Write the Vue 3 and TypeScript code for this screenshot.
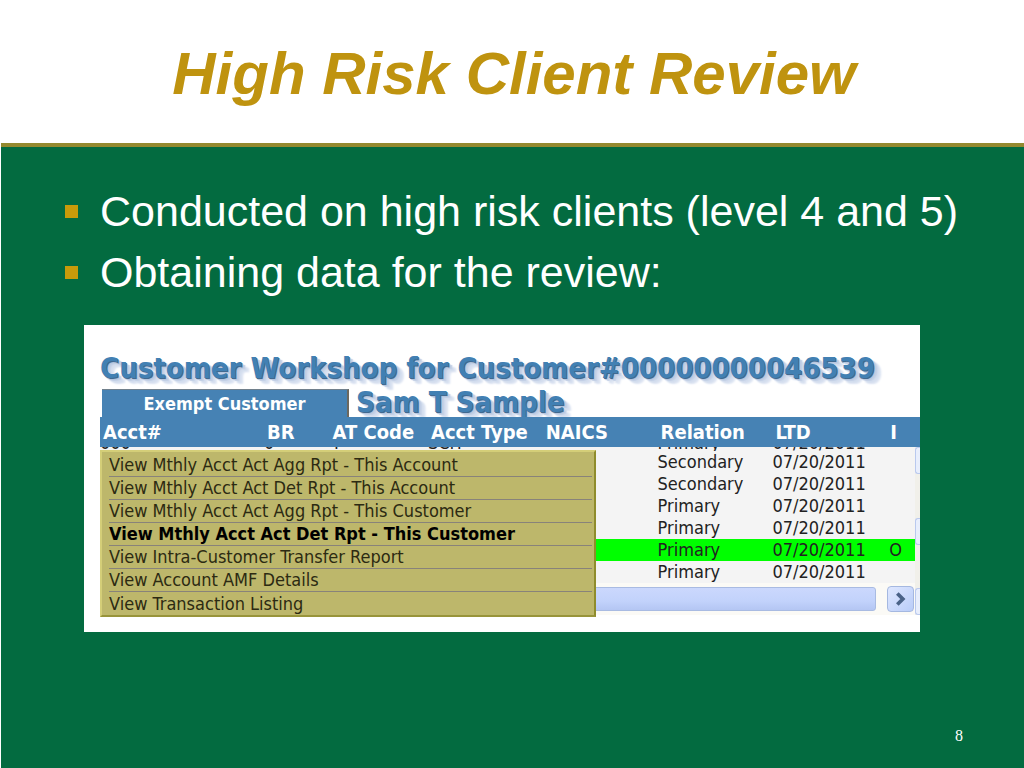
<script setup lang="ts">
interface Account {
  relation: string
  ltd: string
  flag?: string
  selected?: boolean
}

const points: string[] = [
  'Conducted on high risk clients (level 4 and 5)',
  'Obtaining data for the review:',
]

const columns: string[] = ['Acct#', 'BR', 'AT Code', 'Acct Type', 'NAICS', 'Relation', 'LTD', 'I']

const scrolledRow: string[] = ['000', '0', '4', 'SCH', '', 'Primary', '07/20/2011', '']

const accounts: Account[] = [
  { relation: 'Secondary', ltd: '07/20/2011' },
  { relation: 'Secondary', ltd: '07/20/2011' },
  { relation: 'Primary', ltd: '07/20/2011' },
  { relation: 'Primary', ltd: '07/20/2011' },
  { relation: 'Primary', ltd: '07/20/2011', flag: 'O', selected: true },
  { relation: 'Primary', ltd: '07/20/2011' },
]

const menu: { label: string; active?: boolean }[] = [
  { label: 'View Mthly Acct Act Agg Rpt - This Account' },
  { label: 'View Mthly Acct Act Det Rpt - This Account' },
  { label: 'View Mthly Acct Act Agg Rpt - This Customer' },
  { label: 'View Mthly Acct Act Det Rpt - This Customer', active: true },
  { label: 'View Intra-Customer Transfer Report' },
  { label: 'View Account AMF Details' },
  { label: 'View Transaction Listing' },
]
</script>

<template>
  <main class="slide">
    <header class="head">
      <h1>High Risk Client Review</h1>
    </header>
    <section class="body">
      <ul class="points">
        <li v-for="p in points" :key="p">{{ p }}</li>
      </ul>

      <div class="panel">
        <h2 class="workshop">Customer Workshop for Customer#00000000046539</h2>
        <div class="tabs">
          <button type="button" class="tab">Exempt Customer</button>
          <span class="workshop">Sam T Sample</span>
        </div>

        <div class="grid">
          <table>
            <thead>
              <tr>
                <th v-for="c in columns" :key="c" scope="col">{{ c }}</th>
              </tr>
            </thead>
            <tbody>
              <tr class="scrolled">
                <td v-for="(c, i) in scrolledRow" :key="i"><div>{{ c }}</div></td>
              </tr>
              <tr v-for="(a, i) in accounts" :key="i" :class="{ selected: a.selected }">
                <td colspan="5"></td>
                <td>{{ a.relation }}</td>
                <td>{{ a.ltd }}</td>
                <td class="flag">{{ a.flag }}</td>
              </tr>
            </tbody>
          </table>
          <div class="vscroll"><i></i><i></i><i></i></div>
          <div class="hscroll">
            <div class="thumb"></div>
            <button type="button" class="arrow" aria-label="Scroll right">
              <svg viewBox="0 0 26 26" width="26" height="24">
                <path d="M9 7l6 6-6 6" fill="none" stroke="#4a6287" stroke-width="4" />
              </svg>
            </button>
          </div>
          <div class="menu">
            <button v-for="m in menu" :key="m.label" type="button" :class="{ active: m.active }">{{ m.label }}</button>
          </div>
        </div>
      </div>

      <footer>8</footer>
    </section>
  </main>
</template>

<style>
body {
  margin: 0;
  background: #fff;
}
</style>

<style scoped>
* {
  box-sizing: border-box;
}
.slide {
  min-height: 100vh;
  display: flex;
  flex-direction: column;
  font-family: 'Liberation Sans', Arial, sans-serif;
}
.head {
  height: 143px;
  padding: 4px 0 0 4px;
  display: flex;
  align-items: center;
  justify-content: center;
}
h1 {
  margin: 0;
  color: #bf930f;
  font-size: 60px;
  font-style: italic;
  font-weight: bold;
  line-height: 68px;
}
.body {
  flex: 1;
  margin-left: 1px;
  border-top: 4px solid #94892f;
  background: #036b40;
  display: flex;
  flex-direction: column;
}
.points {
  list-style: none;
  margin: 0;
  padding: 34px 0 0 64px;
  color: #fff;
  font-size: 43px;
  line-height: 61px;
}
.points li {
  display: flex;
  align-items: center;
  gap: 22px;
}
.points li::before {
  content: '';
  width: 13px;
  height: 13px;
  background: #c89b0a;
}
.panel {
  margin: 22px 104px 0 83px;
  padding: 29px 0 17px 16px;
  background: #fff;
  font-family: 'DejaVu Sans Condensed', 'DejaVu Sans', sans-serif;
}
.workshop {
  margin: 0;
  font-size: 29px;
  font-weight: bold;
  line-height: 29px;
  white-space: nowrap;
  color: #4280b3;
  text-shadow: 1px 1px 0 #41698f, 2px 2px 1px #b3c4dd, 4px 3px 1px #c3d0e6, 6px 5px 2px #d3ddee, 8px 6px 2px #e0e7f4;
}
.tabs {
  display: flex;
  height: 34px;
  padding-left: 2px;
  align-items: flex-end;
  gap: 7px;
}
.tab {
  width: 247px;
  height: 28px;
  padding: 0;
  border: 0;
  border-top: 1px solid #71808c;
  border-right: 2px solid #6b6860;
  background: #4682b4;
  color: #fff;
  font: bold 18px/26px 'DejaVu Sans Condensed', 'DejaVu Sans', sans-serif;
}
.grid {
  position: relative;
  background: #f4f4f4;
}
table {
  width: 100%;
  table-layout: fixed;
  border-collapse: collapse;
}
th {
  height: 30px;
  padding: 0 0 0 3px;
  background: #4682b4;
  color: #fff;
  font-size: 20px;
  line-height: 30px;
  text-align: left;
  white-space: nowrap;
}
th:nth-child(1) { width: 20%; }
th:nth-child(2) { width: 8%; }
th:nth-child(3) { width: 12%; }
th:nth-child(4), th:nth-child(5), th:nth-child(6), th:nth-child(7) { width: 14%; }
td {
  height: 22px;
  padding: 0;
  color: #222;
  font-size: 18px;
  line-height: 22px;
  white-space: nowrap;
}
.flag {
  padding-left: 2px;
}
.scrolled td {
  height: 4px;
}
.scrolled div {
  display: flex;
  align-items: flex-end;
  height: 4px;
  line-height: 16px;
  overflow: hidden;
}
.selected td {
  background: #0f0;
}
.vscroll {
  position: absolute;
  top: 30px;
  right: 0;
  bottom: 0;
  width: 5px;
  background: #f1f0ea;
  display: flex;
  flex-direction: column;
  justify-content: space-between;
}
.vscroll i {
  height: 27px;
  border: 1px solid #b9c9ee;
  border-right: 0;
  border-radius: 3px 0 0 3px;
  background: #e8eefc;
}
.hscroll {
  display: flex;
  align-items: center;
  justify-content: space-between;
  height: 32px;
  padding: 2px 6px 2px 0;
  background: #fbfaf6;
}
.thumb {
  width: 776px;
  height: 24px;
  border: 1px solid #a9bbe2;
  border-radius: 3px;
  background: linear-gradient(#cbd8fd, #c2d2fb 60%, #b4c6f3);
}
.arrow {
  width: 27px;
  height: 26px;
  padding: 0;
  border: 1px solid #a5b8e0;
  border-radius: 4px;
  background: linear-gradient(135deg, #dfe8ff, #b9ccf8);
}
.arrow svg {
  display: block;
}
.menu {
  position: absolute;
  top: 33px;
  left: 0;
  width: 496px;
  padding: 2px 2px 0 7px;
  border: 2px solid #d4ce78;
  border-right-color: #8f8c2c;
  border-bottom-color: #98943a;
  background: #bdb76b;
}
.menu button {
  display: block;
  width: 100%;
  height: 23px;
  padding: 0;
  border: 0;
  border-bottom: 1px solid #88837a;
  background: none;
  color: #2c2a12;
  font: 18px/22px 'DejaVu Sans Condensed', 'DejaVu Sans', sans-serif;
  text-align: left;
  white-space: nowrap;
}
.menu button:last-child {
  border-bottom: 0;
}
.menu .active {
  color: #000;
  font-weight: bold;
}
footer {
  margin-top: auto;
  padding: 0 61px 23px 0;
  color: #fff;
  font: 16px/18px 'Liberation Serif', serif;
  text-align: right;
}
</style>
